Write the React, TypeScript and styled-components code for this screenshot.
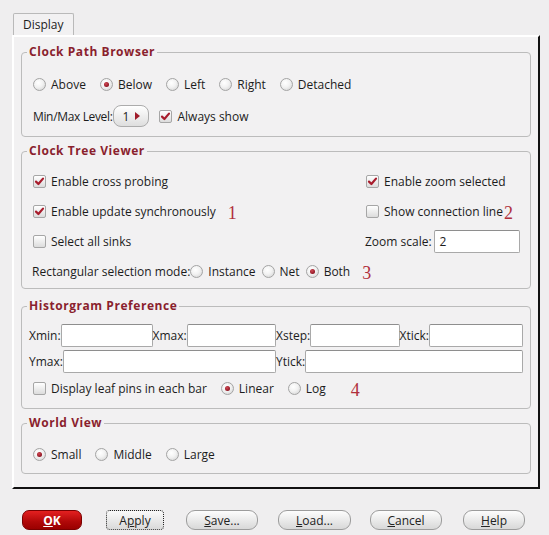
import React from 'react'
import styled, { createGlobalStyle } from 'styled-components'

const Global = createGlobalStyle`
  html, body {
    margin: 0;
    padding: 0;
    background: #efeeef;
  }
  body {
    font-family: "Open Sans", "DejaVu Sans", sans-serif;
    font-size: 12px;
    color: #1c1c1c;
  }
`

const Window = styled.div`
  width: 549px;
  height: 535px;
  box-sizing: border-box;
  padding-top: 13px;
  display: flex;
  flex-direction: column;
  background: #efeeef;
`

const TabBar = styled.div`
  display: flex;
  padding-left: 13px;
  height: 22px;
`

const Tab = styled.div`
  width: 61px;
  height: 22px;
  box-sizing: border-box;
  border: 1px solid #b9b9b9;
  border-bottom: none;
  border-radius: 2px 2px 0 0;
  background: #f2f1f2;
  padding-left: 9px;
  line-height: 22px;
`

const Panel = styled.div`
  margin-left: 12px;
  width: 528px;
  height: 454px;
  box-sizing: border-box;
  border-top: 2px solid #ffffff;
  border-left: 2px solid #ffffff;
  border-right: 2px solid #111111;
  border-bottom: 2px solid #111111;
  background: #f2f1f2;
  padding: 7px 7px 0 7px;
  display: flex;
  flex-direction: column;
`

const Group = styled.fieldset<{ $gap?: number }>`
  margin: ${p => p.$gap ?? 0}px 0 0 0;
  padding: 0;
  min-width: 0;
  border: 1px solid #bcbcbc;
  border-radius: 4px;
`

const Title = styled.legend`
  margin-left: 5px;
  padding: 0 2px;
  height: 16px;
  line-height: 16px;
  font-weight: 700;
  font-size: 12px;
  letter-spacing: 0.55px;
  color: #8a1f2e;
`

const Body = styled.div<{ $pad: string; $gap?: number }>`
  padding: ${p => p.$pad};
  display: flex;
  flex-direction: column;
  gap: ${p => p.$gap ?? 0}px;
`

const Row = styled.div<{ $gap?: number; $indent?: number }>`
  display: flex;
  align-items: center;
  height: 20px;
  gap: ${p => p.$gap ?? 14}px;
  padding-left: ${p => p.$indent ?? 0}px;
`

const Item = styled.label`
  display: flex;
  align-items: center;
  gap: 5px;
  white-space: nowrap;
`

const RadioDot = styled.span<{ $on?: boolean }>`
  position: relative;
  width: 11px;
  height: 11px;
  flex: none;
  border-radius: 50%;
  border: 1px solid #a4a4a4;
  background: radial-gradient(circle at 40% 35%, #ffffff 0%, #f2f2f2 45%, #cfcfcf 100%);
  &::after {
    content: '';
    display: ${p => (p.$on ? 'block' : 'none')};
    position: absolute;
    left: 3px;
    top: 3px;
    width: 5px;
    height: 5px;
    border-radius: 50%;
    background: radial-gradient(circle at 40% 35%, #d24a55 0%, #8e1422 70%);
  }
`

const Box = styled.span`
  width: 11px;
  height: 11px;
  flex: none;
  border: 1px solid #a6a6a6;
  border-radius: 2px;
  background: linear-gradient(#ffffff, #dcdcdc);
  display: flex;
  align-items: center;
  justify-content: center;
`

const Radio: React.FC<{ on?: boolean; label: string }> = ({ on, label }) => (
  <Item>
    <RadioDot $on={on} />
    {label}
  </Item>
)

const Check: React.FC<{ on?: boolean; label: string }> = ({ on, label }) => (
  <Item>
    <Box>
      {on && (
        <svg width="11" height="11" viewBox="0 0 11 11">
          <path d="M2 5.6 L4.4 8 L9 2.6" fill="none" stroke="#a81c2c" strokeWidth="2.2" strokeLinecap="round" strokeLinejoin="round" />
        </svg>
      )}
    </Box>
    {label}
  </Item>
)

const LevelLabel = styled.span`
  white-space: nowrap;
  letter-spacing: -0.35px;
`

const Spin = styled.span`
  margin: 0 10px 0 1px;
  width: 36px;
  height: 22px;
  box-sizing: border-box;
  border: 1px solid #acacac;
  border-radius: 8px;
  background: linear-gradient(#ffffff, #dedede);
  display: flex;
  align-items: center;
  justify-content: center;
  gap: 6px;
`

const Arrow = styled.span`
  width: 0;
  height: 0;
  border-top: 4px solid transparent;
  border-bottom: 4px solid transparent;
  border-left: 5px solid #a01c2a;
`

const Note = styled.span<{ $left: number }>`
  margin-left: ${p => p.$left}px;
  font-family: "Liberation Serif", "DejaVu Serif", serif;
  font-size: 18px;
  line-height: 1;
  color: #b0303c;
  position: relative;
  top: 2px;
`

const ViewerGrid = styled.div`
  display: grid;
  grid-template-columns: 1fr 154px;
  grid-auto-rows: 20px;
  row-gap: 10px;
  padding: 12px 10px 7px 11px;
`

const Cell = styled.div<{ $span?: boolean }>`
  display: flex;
  align-items: center;
  white-space: nowrap;
  grid-column: ${p => (p.$span ? '1 / -1' : 'auto')};
`

const TextBox = styled.div`
  flex: 1;
  min-width: 0;
  height: 23px;
  box-sizing: border-box;
  border: 1px solid #a9a9a9;
  border-top-color: #8e8e8e;
  border-radius: 2px;
  background: #ffffff;
  padding-left: 5px;
  line-height: 21px;
`

const Fields = styled.div<{ $top?: number }>`
  display: flex;
  height: 24px;
  align-items: center;
  margin-top: ${p => p.$top ?? 0}px;
`

const Field = styled.div`
  flex: 1;
  display: flex;
  align-items: center;
  min-width: 0;
`

const Label = styled.span<{ $shift?: number }>`
  white-space: nowrap;
  margin-left: ${p => p.$shift ?? 0}px;
`

const Buttons = styled.div`
  display: flex;
  padding: 21px 0 0 22px;
`

const Button = styled.button<{ $w: number; $left?: number; $kind?: 'primary' | 'focus' }>`
  width: ${p => p.$w}px;
  margin-left: ${p => p.$left ?? 0}px;
  height: 20px;
  box-sizing: border-box;
  padding: 0;
  font-family: inherit;
  font-size: 12px;
  color: #222;
  border: 1px solid #9c9c9c;
  border-radius: 9px;
  background: linear-gradient(#fdfdfd, #d8d8d8);
  ${p =>
    p.$kind === 'primary' &&
    `
    color: #fff;
    font-weight: 700;
    border-color: #7a0000;
    border-radius: 7px;
    background: linear-gradient(#e42020, #b00808 60%, #9a0000);
  `}
  ${p =>
    p.$kind === 'focus' &&
    `
    border: 1px dotted #222;
    border-radius: 4px;
    background: linear-gradient(#fafafa, #dadada);
  `}
`

export default function App() {
  return (
    <Window>
      <Global />
      <TabBar>
        <Tab>Display</Tab>
      </TabBar>
      <Panel>
        <Group>
          <Title>Clock Path Browser</Title>
          <Body $pad="14px 10px 10px 11px" $gap={12}>
            <Row>
              <Radio label="Above" />
              <Radio label="Below" on />
              <Radio label="Left" />
              <Radio label="Right" />
              <Radio label="Detached" />
            </Row>
            <Row $gap={0} $indent={-1}>
              <LevelLabel>Min/Max Level:</LevelLabel>
              <Spin>
                1 <Arrow />
              </Spin>
              <Check label="Always show" on />
            </Row>
          </Body>
        </Group>

        <Group $gap={6}>
          <Title>Clock Tree Viewer</Title>
          <ViewerGrid>
            <Cell>
              <Check label="Enable cross probing" on />
            </Cell>
            <Cell>
              <Check label="Enable zoom selected" on />
            </Cell>
            <Cell>
              <Check label="Enable update synchronously" on />
              <Note $left={12}>1</Note>
            </Cell>
            <Cell>
              <Check label="Show connection line" />
              <Note $left={1}>2</Note>
            </Cell>
            <Cell>
              <Check label="Select all sinks" />
            </Cell>
            <Cell>
              <Label $shift={-1}>Zoom scale:</Label>
              <TextBox style={{ marginLeft: 2 }}>2</TextBox>
            </Cell>
            <Cell $span>
              <Label $shift={-1}>Rectangular selection mode:</Label>
              <Row $gap={6}>
                <Radio label="Instance" />
                <Radio label="Net" />
                <Radio label="Both" on />
              </Row>
              <Note $left={12}>3</Note>
            </Cell>
          </ViewerGrid>
        </Group>

        <Group $gap={9}>
          <Title>Historgram Preference</Title>
          <Body $pad="9px 7px 10px 7px">
            <Fields>
              <Field>
                <Label>Xmin:</Label>
                <TextBox />
              </Field>
              <Field>
                <Label>Xmax:</Label>
                <TextBox />
              </Field>
              <Field>
                <Label>Xstep:</Label>
                <TextBox />
              </Field>
              <Field>
                <Label>Xtick:</Label>
                <TextBox />
              </Field>
            </Fields>
            <Fields $top={2}>
              <Field>
                <Label>Ymax:</Label>
                <TextBox />
              </Field>
              <Field>
                <Label>Ytick:</Label>
                <TextBox />
              </Field>
            </Fields>
            <Row $indent={4} style={{ marginTop: 5 }}>
              <Check label="Display leaf pins in each bar" />
              <Radio label="Linear" on />
              <Radio label="Log" />
              <Note $left={11}>4</Note>
            </Row>
          </Body>
        </Group>

        <Group $gap={6}>
          <Title>World View</Title>
          <Body $pad="13px 10px 9px 11px">
            <Row>
              <Radio label="Small" on />
              <Radio label="Middle" />
              <Radio label="Large" />
            </Row>
          </Body>
        </Group>
      </Panel>
      <Buttons>
        <Button $w={60} $kind="primary">
          <u>O</u>K
        </Button>
        <Button $w={58} $left={24} $kind="focus">
          A<u>p</u>ply
        </Button>
        <Button $w={72} $left={22}>
          <u>S</u>ave...
        </Button>
        <Button $w={73} $left={20}>
          <u>L</u>oad...
        </Button>
        <Button $w={72} $left={19}>
          <u>C</u>ancel
        </Button>
        <Button $w={62} $left={21}>
          <u>H</u>elp
        </Button>
      </Buttons>
    </Window>
  )
}
